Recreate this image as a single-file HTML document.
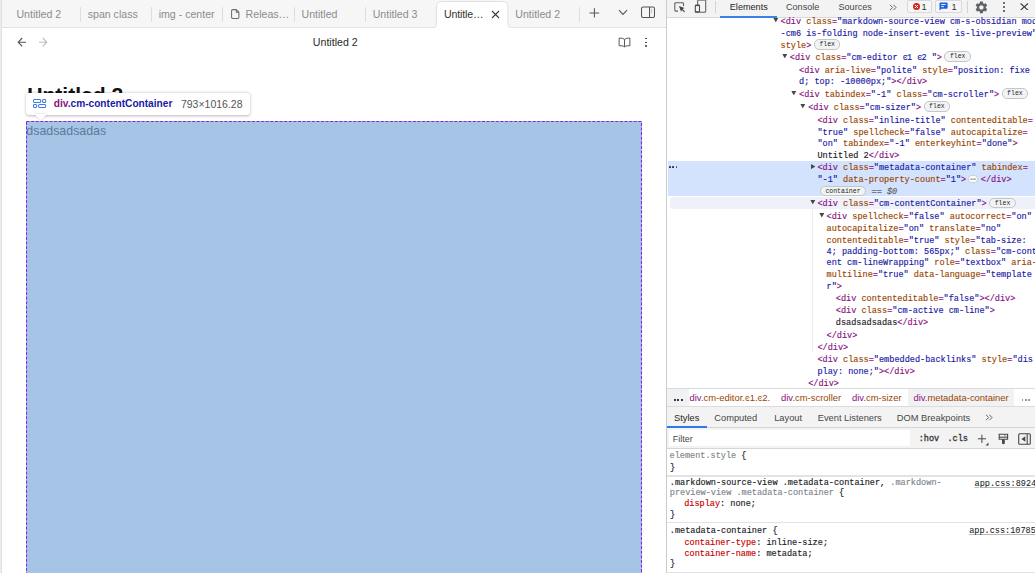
<!DOCTYPE html>
<html><head><meta charset="utf-8">
<style>
*{box-sizing:border-box}
html,body{margin:0;padding:0}
body{width:1035px;height:573px;overflow:hidden;position:relative;background:#fff;font-family:"Liberation Sans",sans-serif}
.a{position:absolute}
.s{position:absolute;line-height:0;white-space:pre;font-family:"Liberation Sans",sans-serif}
.m{position:absolute;line-height:0;white-space:pre;font-family:"Liberation Mono",monospace}
svg{display:block}
/* obsidian */
#tabbar{left:0;top:0;width:666px;height:28px;background:#f6f6f6;border-bottom:1px solid #e2e2e2}
.tabt{font-size:10.6px;color:#8c8c8c;top:14.4px}
.sep{position:absolute;top:6.5px;width:1px;height:15px;background:#dedede}
/* devtools */
.ln{position:absolute;line-height:0;white-space:pre;font-family:"Liberation Mono",monospace;font-size:8.55px;color:#202124;-webkit-text-stroke:0.15px currentColor}
.t{color:#881280}.a_{}
.ln .a{position:static;color:#994500}
.v{color:#1a1aa6}.x{color:#202124}
.tri{position:absolute}
.bdg{position:absolute;height:9.8px;border:0.8px solid #c4c7c5;border-radius:5px;background:#f1f3f4;font-family:"Liberation Mono",monospace;font-size:6.5px;line-height:8.2px;text-align:center;color:#1f1f1f}
.ell{position:absolute;width:9.6px;height:7.2px;border:0.8px solid #c4c7c5;border-radius:3.6px;background:#fff;padding:1.3px 0 0 0}
.eq{color:#5f6368}
.dt{font-size:9.1px;color:#474747}
.crumb{font-size:9.45px;top:398.4px}
.ct{color:#881280}.cc{color:#994500}
.st{font-size:8.55px;color:#202124;-webkit-text-stroke:0.15px currentColor}
.gray{color:#80868b}
.prop{color:#c80000}
</style></head><body>

<!-- ================= OBSIDIAN ================= -->
<div class="a" style="left:0;top:0;width:1px;height:573px;background:#ececec;z-index:5"></div>
<div class="a" style="left:1px;top:0;width:1px;height:573px;background:#e0e0e0;z-index:5"></div>
<div id="tabbar" class="a"></div>
<div class="sep" style="left:80px"></div>
<div class="sep" style="left:151px"></div>
<div class="sep" style="left:222px"></div>
<div class="sep" style="left:294px"></div>
<div class="sep" style="left:365px"></div>
<div class="sep" style="left:579px"></div>
<div class="s tabt" style="left:16.4px">Untitled 2</div>
<div class="s tabt" style="left:87.7px">span class</div>
<div class="s tabt" style="left:158.7px">img - center</div>
<div class="a" style="left:230px;top:8px"><svg width="11" height="12" viewBox="0 0 11 12"><path d="M1.6 2.8Q1.6 1.6 2.8 1.6H6.3L8.9 4.2V9.3Q8.9 10.5 7.7 10.5H2.8Q1.6 10.5 1.6 9.3Z M6.3 1.6V4.2H8.9" fill="none" stroke="#6b6b6b" stroke-width="1.05" stroke-linejoin="round"/></svg></div>
<div class="s tabt" style="left:245.6px">Releas…</div>
<div class="s tabt" style="left:301.5px">Untitled</div>
<div class="s tabt" style="left:372.7px">Untitled 3</div>
<!-- active tab -->
<div class="a" style="left:431px;top:1px;width:84px;height:28px"><svg width="84" height="28" viewBox="0 0 84 28"><path d="M0 27.5Q5.5 27.5 5.5 22V6Q5.5 0.5 11 0.5H71.4Q76.9 0.5 76.9 6V22Q76.9 27.5 82.4 27.5" fill="#fff" stroke="#e0e0e0" stroke-width="1"/><rect x="0" y="27" width="84" height="2" fill="#fff"/></svg></div>
<div class="s tabt" style="left:444px;color:#333;letter-spacing:-0.15px">Untitle…</div>
<div class="a" style="left:491px;top:9.5px"><svg width="9" height="9" viewBox="0 0 9 9"><path d="M1 1L8 8M8 1L1 8" stroke="#3a3a3a" stroke-width="1.1"/></svg></div>
<div class="s tabt" style="left:515.3px">Untitled 2</div>
<div class="a" style="left:588.6px;top:7.6px"><svg width="11" height="10" viewBox="0 0 11 10"><path d="M0.6 4.9H10.2M5.4 0.3V9.5" stroke="#555" stroke-width="1.05"/></svg></div>
<div class="a" style="left:618.2px;top:9px"><svg width="10" height="7" viewBox="0 0 10 7"><path d="M1 1.2L5 5.4L9 1.2" fill="none" stroke="#555" stroke-width="1.1"/></svg></div>
<div class="a" style="left:640px;top:5.6px"><svg width="16" height="12.4" viewBox="0 0 16 13"><rect x="1.2" y="1.1" width="13.6" height="11" rx="1.6" fill="none" stroke="#555" stroke-width="1.1"/><path d="M9.6 1.1V12.1" stroke="#555" stroke-width="1.1"/><path d="M11.8 3.6V4.6M11.8 5.8V6.8" stroke="#777" stroke-width="0.9"/></svg></div>

<!-- view header -->
<div class="a" style="left:17px;top:37px"><svg width="10" height="10" viewBox="0 0 10 10"><path d="M9 5.2H1.2M5.2 1L1.2 5.2L5.2 9.4" fill="none" stroke="#555" stroke-width="1.1"/></svg></div>
<div class="a" style="left:37.8px;top:37px"><svg width="10" height="10" viewBox="0 0 10 10"><path d="M1 5.2H8.8M4.8 1L8.8 5.2L4.8 9.4" fill="none" stroke="#bbb" stroke-width="1.1"/></svg></div>
<div class="s" style="left:312.8px;top:42.2px;font-size:10.65px;color:#2a2a2a">Untitled 2</div>
<div class="a" style="left:617.6px;top:36.6px"><svg width="13" height="11" viewBox="0 0 14 11"><path d="M7 2.2Q5.5 0.8 3 0.8H1.2V9H3.5Q5.8 9 7 10.2Q8.2 9 10.5 9H12.8V0.8H11Q8.5 0.8 7 2.2ZM7 2.2V10.2" fill="none" stroke="#555" stroke-width="1.05" stroke-linejoin="round"/></svg></div>
<div class="a" style="left:645px;top:37.5px;width:1.9px;height:1.9px;background:#333;border-radius:50%"></div>
<div class="a" style="left:645px;top:41.5px;width:1.9px;height:1.9px;background:#333;border-radius:50%"></div>
<div class="a" style="left:645px;top:45px;width:1.9px;height:1.9px;background:#333;border-radius:50%"></div>

<!-- inline title -->
<div class="s" style="left:27.2px;top:95px;font-size:21.1px;font-weight:bold;color:#111">Untitled 2</div>

<!-- highlight overlay -->
<div class="s" style="left:26.3px;top:130.8px;font-size:12.4px;color:#222">dsadsadsadas</div>
<div class="a" style="left:26px;top:121px;width:616px;height:460px;background:rgba(120,165,215,0.66)"></div>
<div class="a" style="left:26px;top:121px"><svg width="617" height="460"><rect x="0.5" y="0.5" width="615" height="470" fill="none" stroke="#7f2fe0" stroke-width="1.1" stroke-dasharray="3.1 1.5"/></svg></div>

<!-- tooltip -->
<div class="a" style="left:26.3px;top:93.4px;width:224px;height:21.4px;background:#fff;border-radius:3px;box-shadow:0 0.5px 3px rgba(0,0,0,.28)"></div>
<div class="a" style="left:33.8px;top:114.3px"><svg width="13.4" height="6.5" viewBox="0 0 13.4 6.5" style="overflow:visible;filter:drop-shadow(0 0.6px 0.8px rgba(0,0,0,.2))"><path d="M0 0H13.4L6.7 6.3Z" fill="#fff"/></svg></div>
<div class="a" style="left:33px;top:99px"><svg width="14" height="10" viewBox="0 0 14 10"><g fill="none" stroke="#3c7ae8" stroke-width="1.05"><rect x="0.5" y="0.5" width="7.2" height="3" rx="1.1"/><rect x="9.5" y="0.5" width="3.2" height="3" rx="1.1"/><rect x="0.5" y="5.4" width="3.2" height="3" rx="1.1"/><rect x="5.5" y="5.4" width="7.2" height="3" rx="1.1"/></g></svg></div>
<div class="s" style="left:53.8px;top:103.5px;font-size:10.15px;font-weight:bold;color:#1a1aa6"><span style="color:#881280">div</span>.cm-contentContainer</div>
<div class="s" style="left:180.9px;top:103.5px;font-size:10.5px;color:#555">793×1016.28</div>

<!-- ================= DEVTOOLS ================= -->
<div class="a" style="left:666px;top:0;width:1px;height:573px;background:#c9cbcf;z-index:3"></div>
<div class="a" style="left:667px;top:0;width:368px;height:18px;background:#f3f3f3;border-bottom:1px solid #d8d8d8"></div>
<!-- inspect icon -->
<div class="a" style="left:673px;top:1px"><svg width="13" height="12" viewBox="0 0 13 12"><path d="M10.5 5V2.7Q10.5 1.7 9.5 1.7H2.8Q1.8 1.7 1.8 2.7V9.1Q1.8 10.1 2.8 10.1H5" fill="none" stroke="#5b5e63" stroke-width="1.05"/><path d="M5.9 5.1L11.6 7.1L9.3 8.2L8.1 10.7Z" fill="#474747"/><path d="M8.8 8.1L11.6 10.9" stroke="#474747" stroke-width="1.2"/></svg></div>
<!-- device icon -->
<div class="a" style="left:694px;top:-1px"><svg width="14" height="15" viewBox="0 0 14 15"><path d="M3.7 6V1.5Q3.7 0.5 4.7 0.5H10.7Q11.7 0.5 11.7 1.5V12.3Q11.7 13.3 10.7 13.3H5.9" fill="none" stroke="#5b5e63" stroke-width="1.05"/><rect x="1.3" y="6.1" width="4.2" height="7.2" rx="0.8" fill="none" stroke="#474747" stroke-width="1.05"/><path d="M1.3 6.6H5.5M1.3 12.8H5.5" stroke="#474747" stroke-width="1"/><rect x="3.2" y="1" width="9" height="0.9" fill="#8a8d91"/></svg></div>
<div class="a" style="left:715px;top:1px;width:1px;height:11.5px;background:#d3d3d3"></div>
<div class="s dt" style="left:729.8px;top:7px;color:#1f1f1f">Elements</div>
<div class="s dt" style="left:786px;top:7px">Console</div>
<div class="s dt" style="left:838.5px;top:7px">Sources</div>
<div class="a" style="left:888.5px;top:3.5px"><svg width="8" height="7" viewBox="0 0 8 7"><path d="M1 0.8L3.6 3.5L1 6.2M4.4 0.8L7 3.5L4.4 6.2" fill="none" stroke="#5f6368" stroke-width="1"/></svg></div>
<div class="a" style="left:720px;top:16.2px;width:57px;height:1.8px;background:#3d80e6"></div>
<!-- badges -->
<div class="a" style="left:907.2px;top:-0.4px;width:25px;height:13.8px;border:1px solid #d6d8dc;border-radius:2px;background:#f6f6f6"></div>
<div class="a" style="left:912.5px;top:3.2px;width:7px;height:7px;border-radius:50%;background:#cd2b22"></div>
<div class="a" style="left:913.5px;top:4.2px"><svg width="5" height="5" viewBox="0 0 5 5"><path d="M1 1L4 4M4 1L1 4" stroke="#fff" stroke-width="1"/></svg></div>
<div class="s dt" style="left:921.5px;top:7px;font-size:9.3px;color:#333">1</div>
<div class="a" style="left:934.6px;top:-0.4px;width:27px;height:13.8px;border:1px solid #d6d8dc;border-radius:2px;background:#f6f6f6"></div>
<div class="a" style="left:939.4px;top:2.2px"><svg width="9" height="9" viewBox="0 0 9 9"><path d="M1.2 0.5H7.8Q8.6 0.5 8.6 1.3V5.9Q8.6 6.7 7.8 6.7H2.6L0.5 8.6V1.3Q0.5 0.5 1.2 0.5Z" fill="#1b62e0"/><path d="M2.2 2.5H6.6M2.2 4.6H5" stroke="#fff" stroke-width="0.9"/></svg></div>
<div class="s dt" style="left:951.5px;top:7px;font-size:9.3px;color:#333">1</div>
<div class="a" style="left:967px;top:1px;width:1px;height:11.5px;background:#d3d3d3"></div>
<!-- gear -->
<div class="a" style="left:974.1px;top:-0.3px"><svg width="14.8" height="14.8" viewBox="0 0 24 24"><path fill="#5f6368" d="M19.14 12.94c.04-.3.06-.61.06-.94 0-.32-.02-.64-.07-.94l2.03-1.58c.18-.14.23-.41.12-.61l-1.92-3.32c-.12-.22-.37-.29-.59-.22l-2.39.96c-.5-.38-1.03-.7-1.62-.94l-.36-2.54c-.04-.24-.24-.41-.48-.41h-3.84c-.24 0-.43.17-.47.41l-.36 2.54c-.59.24-1.13.57-1.62.94l-2.39-.96c-.22-.08-.47 0-.59.22L2.74 8.87c-.12.21-.08.47.12.61l2.03 1.58c-.05.3-.09.63-.09.94s.02.64.07.94l-2.03 1.58c-.18.14-.23.41-.12.61l1.92 3.32c.12.22.37.29.59.22l2.39-.96c.5.38 1.03.7 1.62.94l.36 2.54c.05.24.24.41.48.41h3.84c.24 0 .44-.17.47-.41l.36-2.54c.59-.24 1.13-.56 1.62-.94l2.39.96c.22.08.47 0 .59-.22l1.92-3.32c.12-.22.07-.47-.12-.61l-2.01-1.58zM12 15.6c-1.98 0-3.6-1.62-3.6-3.6s1.62-3.6 3.6-3.6 3.6 1.62 3.6 3.6-1.62 3.6-3.6 3.6z"/></svg></div>
<div class="a" style="left:1002.6px;top:1.9px;width:2.2px;height:2.2px;background:#444;border-radius:50%"></div>
<div class="a" style="left:1002.6px;top:5.65px;width:2.2px;height:2.2px;background:#444;border-radius:50%"></div>
<div class="a" style="left:1002.6px;top:9.7px;width:2.2px;height:2.2px;background:#444;border-radius:50%"></div>
<div class="a" style="left:1020.4px;top:2.6px"><svg width="8.6" height="7.6" viewBox="0 0 9 8"><path d="M0.6 0.5L8.4 7.6M8.4 0.5L0.6 7.6" stroke="#3c3c3c" stroke-width="1.15"/></svg></div>

<!-- elements tree rows -->
<div class="a" style="left:668px;top:161.4px;width:367px;height:34.9px;background:#d3e3fd"></div>
<div class="a" style="left:669.8px;top:196.5px;width:366px;height:12.7px;background:#eef1f9;border-radius:3px 0 0 3px"></div>
<div class="a" style="left:811.5px;top:209px;width:1px;height:143px;background:#ececec"></div>
<div class="a" style="left:669px;top:166.3px;width:1.9px;height:1.9px;background:#333;border-radius:0.4px"></div>
<div class="a" style="left:672.2px;top:166.3px;width:1.9px;height:1.9px;background:#333;border-radius:0.4px"></div>
<div class="a" style="left:675.5px;top:166.3px;width:1.9px;height:1.9px;background:#333;border-radius:0.4px"></div>
<div class="tri" style="left:772.70px;top:17.80px"><svg width="5.6" height="4.4" viewBox="0 0 10 9"><path d="M0 0H10L5 9Z" fill="#474747"/></svg></div>
<div class="ln" style="left:780.60px;top:21.80px"><span class="t">&lt;div</span><span class="x"> </span><span class="a">class</span><span class="t">=</span><span class="v">"markdown-source-view cm-s-obsidian mod</span></div>
<div class="ln" style="left:780.60px;top:33.90px"><span class="v">-cm6 is-folding node-insert-event is-live-preview"</span><span class="x"> </span></div>
<div class="bdg" style="left:813.98px;top:39.30px;width:26.5px;height:10.9px;line-height:10.8px">flex</div>
<div class="ln" style="left:780.60px;top:45.80px"><span class="a">style</span><span class="t">&gt;</span></div>
<div class="tri" style="left:781.90px;top:53.90px"><svg width="5.6" height="4.4" viewBox="0 0 10 9"><path d="M0 0H10L5 9Z" fill="#474747"/></svg></div>
<div class="bdg" style="left:944.45px;top:51.40px;width:26.5px;height:10.9px;line-height:10.8px">flex</div>
<div class="ln" style="left:789.80px;top:57.90px"><span class="t">&lt;div</span><span class="x"> </span><span class="a">class</span><span class="t">=</span><span class="v">"cm-editor <span style="letter-spacing:-0.9px">ͼ</span>1 <span style="letter-spacing:-0.9px">ͼ</span>2 "</span><span class="t">&gt;</span></div>
<div class="ln" style="left:799.00px;top:71.20px"><span class="t">&lt;div</span><span class="x"> </span><span class="a">aria-live</span><span class="t">=</span><span class="v">"polite"</span><span class="x"> </span><span class="a">style</span><span class="t">=</span><span class="v">"position: fixe</span></div>
<div class="ln" style="left:799.00px;top:82.20px"><span class="v">d; top: -10000px;"</span><span class="t">&gt;&lt;/div&gt;</span></div>
<div class="tri" style="left:791.10px;top:90.80px"><svg width="5.6" height="4.4" viewBox="0 0 10 9"><path d="M0 0H10L5 9Z" fill="#474747"/></svg></div>
<div class="bdg" style="left:1001.67px;top:88.30px;width:26.5px;height:10.9px;line-height:10.8px">flex</div>
<div class="ln" style="left:799.00px;top:94.80px"><span class="t">&lt;div</span><span class="x"> </span><span class="a">tabindex</span><span class="t">=</span><span class="v">"-1"</span><span class="x"> </span><span class="a">class</span><span class="t">=</span><span class="v">"cm-scroller"</span><span class="t">&gt;</span></div>
<div class="tri" style="left:800.30px;top:103.80px"><svg width="5.6" height="4.4" viewBox="0 0 10 9"><path d="M0 0H10L5 9Z" fill="#474747"/></svg></div>
<div class="bdg" style="left:923.66px;top:101.30px;width:26.5px;height:10.9px;line-height:10.8px">flex</div>
<div class="ln" style="left:808.20px;top:107.80px"><span class="t">&lt;div</span><span class="x"> </span><span class="a">class</span><span class="t">=</span><span class="v">"cm-sizer"</span><span class="t">&gt;</span></div>
<div class="ln" style="left:817.40px;top:121.30px"><span class="t">&lt;div</span><span class="x"> </span><span class="a">class</span><span class="t">=</span><span class="v">"inline-title"</span><span class="x"> </span><span class="a">contenteditable</span><span class="t">=</span></div>
<div class="ln" style="left:817.40px;top:133.00px"><span class="v">"true"</span><span class="x"> </span><span class="a">spellcheck</span><span class="t">=</span><span class="v">"false"</span><span class="x"> </span><span class="a">autocapitalize</span><span class="t">=</span></div>
<div class="ln" style="left:817.40px;top:144.20px"><span class="v">"on"</span><span class="x"> </span><span class="a">tabindex</span><span class="t">=</span><span class="v">"-1"</span><span class="x"> </span><span class="a">enterkeyhint</span><span class="t">=</span><span class="v">"done"</span><span class="t">&gt;</span></div>
<div class="ln" style="left:817.40px;top:156.20px"><span class="x">Untitled 2</span><span class="t">&lt;/div&gt;</span></div>
<div class="tri" style="left:810.80px;top:163.80px"><svg width="4.5" height="5.2" viewBox="0 0 9 10"><path d="M0 0V10L9 5Z" fill="#474747"/></svg></div>
<div class="ln" style="left:817.40px;top:168.30px"><span class="t">&lt;div</span><span class="x"> </span><span class="a">class</span><span class="t">=</span><span class="v">"metadata-container"</span><span class="x"> </span><span class="a">tabindex</span><span class="t">=</span></div>
<div class="a" style="left:968.3px;top:174.70px"><svg width="10" height="8" viewBox="0 0 10 8"><rect x="0.4" y="0.4" width="9.2" height="7.2" rx="3.6" fill="#fff" stroke="#c4c7c5" stroke-width="0.8"/><circle cx="3" cy="4.1" r="0.7" fill="#333"/><circle cx="5" cy="4.1" r="0.7" fill="#333"/><circle cx="7" cy="4.1" r="0.7" fill="#333"/></svg></div>
<div class="ln" style="left:980.8px;top:179.80px"><span class="t">&lt;/div&gt;</span></div>
<div class="ln" style="left:817.40px;top:179.80px"><span class="v">"-1"</span><span class="x"> </span><span class="a">data-property-count</span><span class="t">=</span><span class="v">"1"</span><span class="t">&gt;</span></div>
<div class="bdg" style="left:820.40px;top:185.80px;width:45.2px;height:10.3px;line-height:9.4px">container</div>
<div class="ln" style="left:871.5px;top:192.00px"><span class="eq">== </span><span class="eq" style="font-style:italic">$0</span></div>
<div class="ln" style="left:817.40px;top:192.00px"></div>
<div class="tri" style="left:809.50px;top:200.10px"><svg width="5.6" height="4.4" viewBox="0 0 10 9"><path d="M0 0H10L5 9Z" fill="#474747"/></svg></div>
<div class="bdg" style="left:989.29px;top:197.60px;width:26.5px;height:10.9px;line-height:10.8px">flex</div>
<div class="ln" style="left:817.40px;top:204.10px"><span class="t">&lt;div</span><span class="x"> </span><span class="a">class</span><span class="t">=</span><span class="v">"cm-contentContainer"</span><span class="t">&gt;</span></div>
<div class="tri" style="left:818.70px;top:213.40px"><svg width="5.6" height="4.4" viewBox="0 0 10 9"><path d="M0 0H10L5 9Z" fill="#474747"/></svg></div>
<div class="ln" style="left:826.60px;top:217.40px"><span class="t">&lt;div</span><span class="x"> </span><span class="a">spellcheck</span><span class="t">=</span><span class="v">"false"</span><span class="x"> </span><span class="a">autocorrect</span><span class="t">=</span><span class="v">"on"</span></div>
<div class="ln" style="left:826.60px;top:229.00px"><span class="a">autocapitalize</span><span class="t">=</span><span class="v">"on"</span><span class="x"> </span><span class="a">translate</span><span class="t">=</span><span class="v">"no"</span></div>
<div class="ln" style="left:826.60px;top:240.70px"><span class="a">contenteditable</span><span class="t">=</span><span class="v">"true"</span><span class="x"> </span><span class="a">style</span><span class="t">=</span><span class="v">"tab-size:</span></div>
<div class="ln" style="left:826.60px;top:252.00px"><span class="v">4; padding-bottom: 565px;"</span><span class="x"> </span><span class="a">class</span><span class="t">=</span><span class="v">"cm-cont</span></div>
<div class="ln" style="left:826.60px;top:263.40px"><span class="v">ent cm-lineWrapping"</span><span class="x"> </span><span class="a">role</span><span class="t">=</span><span class="v">"textbox"</span><span class="x"> </span><span class="a">aria-</span></div>
<div class="ln" style="left:826.60px;top:275.00px"><span class="a">multiline</span><span class="t">=</span><span class="v">"true"</span><span class="x"> </span><span class="a">data-language</span><span class="t">=</span><span class="v">"template</span></div>
<div class="ln" style="left:826.60px;top:286.60px"><span class="v">r"</span><span class="t">&gt;</span></div>
<div class="ln" style="left:835.80px;top:298.80px"><span class="t">&lt;div</span><span class="x"> </span><span class="a">contenteditable</span><span class="t">=</span><span class="v">"false"</span><span class="t">&gt;&lt;/div&gt;</span></div>
<div class="ln" style="left:835.80px;top:311.10px"><span class="t">&lt;div</span><span class="x"> </span><span class="a">class</span><span class="t">=</span><span class="v">"cm-active cm-line"</span><span class="t">&gt;</span></div>
<div class="ln" style="left:835.80px;top:323.10px"><span class="x">dsadsadsadas</span><span class="t">&lt;/div&gt;</span></div>
<div class="ln" style="left:826.60px;top:335.50px"><span class="t">&lt;/div&gt;</span></div>
<div class="ln" style="left:817.40px;top:347.80px"><span class="t">&lt;/div&gt;</span></div>
<div class="ln" style="left:817.40px;top:360.20px"><span class="t">&lt;div</span><span class="x"> </span><span class="a">class</span><span class="t">=</span><span class="v">"embedded-backlinks"</span><span class="x"> </span><span class="a">style</span><span class="t">=</span><span class="v">"dis</span></div>
<div class="ln" style="left:817.40px;top:371.60px"><span class="v">play: none;"</span><span class="t">&gt;&lt;/div&gt;</span></div>
<div class="ln" style="left:808.20px;top:383.90px"><span class="t">&lt;/div&gt;</span></div>

<!-- breadcrumbs -->
<div class="a" style="left:667px;top:387.5px;width:368px;height:20px;background:#fff;border-top:1.2px solid #dadada"></div>
<div class="a" style="left:667px;top:388.7px;width:22px;height:17.5px;background:#f1f2f4"></div>
<div class="a" style="left:673.8px;top:399px;width:2px;height:2px;background:#3a3a3a"></div><div class="a" style="left:677px;top:399px;width:2px;height:2px;background:#3a3a3a"></div><div class="a" style="left:680.5px;top:399px;width:2px;height:2px;background:#3a3a3a"></div>
<div class="a" style="left:907.7px;top:388.7px;width:106.3px;height:17.5px;background:#f1f2f4"></div>
<div class="s crumb" style="left:689.5px"><span class="ct">div</span><span class="cc">.cm-editor.ͼ1.ͼ2.</span></div>
<div class="s crumb" style="left:781px"><span class="ct">div</span><span class="cc">.cm-scroller</span></div>
<div class="s crumb" style="left:852px"><span class="ct">div</span><span class="cc">.cm-sizer</span></div>
<div class="s crumb" style="left:913.4px"><span class="ct">div</span><span class="cc">.metadata-container</span></div>
<div class="a" style="left:1021.8px;top:399.3px;width:1.7px;height:1.7px;background:#999"></div><div class="a" style="left:1025px;top:399.3px;width:1.7px;height:1.7px;background:#999"></div><div class="a" style="left:1028.3px;top:399.3px;width:1.7px;height:1.7px;background:#999"></div>

<!-- styles tabs -->
<div class="a" style="left:667px;top:406px;width:368px;height:22px;background:#f3f3f3;border-top:1px solid #dcdcdc;border-bottom:1px solid #d6d6d6"></div>
<div class="s dt" style="left:674px;top:418.1px;font-size:9.3px;color:#1f1f1f">Styles</div>
<div class="s dt" style="left:714.3px;top:418.1px;font-size:9.3px">Computed</div>
<div class="s dt" style="left:774.2px;top:418.1px;font-size:9.3px">Layout</div>
<div class="s dt" style="left:817.7px;top:418.1px;font-size:9.3px">Event Listeners</div>
<div class="s dt" style="left:896.8px;top:418.1px;font-size:9.3px">DOM Breakpoints</div>
<div class="a" style="left:984.5px;top:414px"><svg width="8" height="7" viewBox="0 0 8 7"><path d="M1 0.8L3.6 3.5L1 6.2M4.4 0.8L7 3.5L4.4 6.2" fill="none" stroke="#5f6368" stroke-width="1"/></svg></div>
<div class="a" style="left:667px;top:426.4px;width:40px;height:1.5px;background:#2f78e6"></div>

<!-- filter bar -->
<div class="a" style="left:667px;top:428px;width:368px;height:21px;background:#f3f3f3;border-bottom:1px solid #d6d6d6"></div>
<div class="a" style="left:669px;top:429.6px;width:241px;height:16.4px;background:#fff"></div>
<div class="s dt" style="left:672.8px;top:438.8px;font-size:8.95px;color:#474747">Filter</div>
<div class="m" style="left:918.7px;top:439.4px;font-size:8.55px;color:#333;-webkit-text-stroke:0.3px #333">:hov</div>
<div class="m" style="left:947.4px;top:439.4px;font-size:8.55px;color:#333;-webkit-text-stroke:0.3px #333">.cls</div>
<div class="a" style="left:977px;top:433.5px"><svg width="12" height="12" viewBox="0 0 12 12"><path d="M0.8 4.8H9M4.9 0.7V8.9" stroke="#474747" stroke-width="1"/><path d="M11.5 8.5V11.5H8.5Z" fill="#474747"/></svg></div>
<div class="a" style="left:997.5px;top:432.5px"><svg width="11" height="12" viewBox="0 0 11 12"><path d="M1.2 1.2H9.6V6.2H1.2Z" fill="none" stroke="#474747" stroke-width="1.1"/><path d="M1.2 4.2H9.6" stroke="#474747" stroke-width="1.1"/><path d="M4 6.2H6.8V10.5Q5.4 11.8 4 10.5Z" fill="#474747"/><path d="M7 2V3.2" stroke="#474747" stroke-width="0.8"/></svg></div>
<div class="a" style="left:1017.5px;top:432.5px"><svg width="13" height="12" viewBox="0 0 13 12"><rect x="0.7" y="0.7" width="11.6" height="10.6" rx="1" fill="none" stroke="#474747" stroke-width="1.1"/><path d="M9.2 0.7V11.3" stroke="#474747" stroke-width="1.1"/><path d="M7.3 3.2V8.8L3.4 6Z" fill="#474747"/></svg></div>

<!-- styles sections -->
<div class="m st" style="left:669.5px;top:456px"><span class="gray">element.style</span> {</div>
<div class="m st" style="left:670px;top:468px">}</div>
<div class="a" style="left:667px;top:475px;width:368px;height:1.6px;background:#e3e3e3"></div>
<div class="m st" style="left:669.8px;top:483.4px">.markdown-source-view .metadata-container, <span class="gray">.markdown-</span></div>
<div class="m st" style="left:974.6px;top:484px;text-decoration:underline;text-decoration-color:#b8b8b8;-webkit-text-stroke:0.05px currentColor">app.css:8924</div>
<div class="m st" style="left:669.8px;top:493px"><span class="gray">preview-view .metadata-container</span> {</div>
<div class="m st" style="left:684.2px;top:504px"><span class="prop">display</span>: none;</div>
<div class="m st" style="left:670px;top:514.6px">}</div>
<div class="a" style="left:667px;top:521.8px;width:368px;height:1.6px;background:#e3e3e3"></div>
<div class="m st" style="left:669.8px;top:530.8px">.metadata-container {</div>
<div class="m st" style="left:969.2px;top:531.4px;text-decoration:underline;text-decoration-color:#b8b8b8;-webkit-text-stroke:0.05px currentColor">app.css:10785</div>
<div class="m st" style="left:684.4px;top:542.6px"><span class="prop">container-type</span>: inline-size;</div>
<div class="m st" style="left:684.4px;top:553.6px"><span class="prop">container-name</span>: metadata;</div>
<div class="m st" style="left:670px;top:563.6px">}</div>
<div class="a" style="left:667px;top:571.5px;width:368px;height:1.6px;background:#e3e3e3"></div>

</body></html>
